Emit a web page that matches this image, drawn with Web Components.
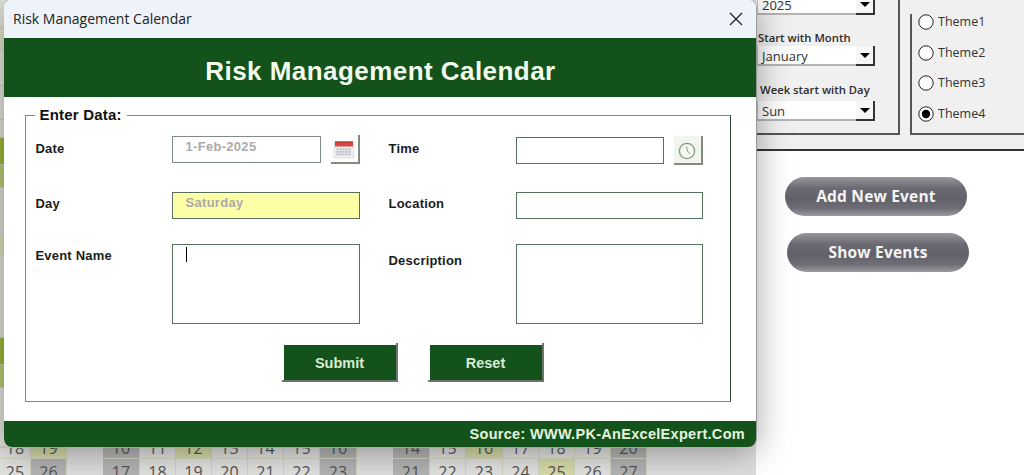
<!DOCTYPE html>
<html>
<head>
<meta charset="utf-8">
<title>Risk Management Calendar</title>
<style>
  html, body { margin: 0; padding: 0; background: #fff; }
</style>
</head>
<body>
<risk-app></risk-app>
<script>
class SheetStrip extends HTMLElement {
  connectedCallback() {
    const bands = [
      [28, "#e6e6e0"], [22, "#e4e6cc"], [36, "#e8e8e0"], [34, "#e6e6e0"], [18, "#e4e6d8"],
      [27, "#9fb83c"], [23, "#bccf78"], [47, "#e0e0da"], [20, "#dfe3b8"], [83, "#e4e4de"],
      [27, "#9fb83c"], [23, "#bccf78"], [59, "#e6e6e0"],
    ];
    this.attachShadow({ mode: "open" }).innerHTML = `
      <style>
        :host { display: flex; flex-direction: column; width: 5px; height: 447px; }
        div { box-sizing: border-box; border-bottom: 1px solid #cfd0c4; }
      </style>
      ${bands.map(([h, c]) => `<div style="height:${h}px;background:${c}"></div>`).join("")}`;
  }
}
customElements.define("sheet-strip", SheetStrip);

class CalendarRows extends HTMLElement {
  connectedCallback() {
    // top row is almost hidden behind the dialog, only the lower part of its digits shows
    const months = [
      { x: 0, w: [31, 36], top: ["18", "19"], bottom: ["25", "26"], topTone: ["", "h"], botTone: ["", "d"] },
      { x: 36, w: [37, 36, 36, 36, 36, 36, 37], top: ["10", "11", "12", "13", "14", "15", "16"], bottom: ["17", "18", "19", "20", "21", "22", "23"], topTone: ["d", "", "h", "", "", "", "d"], botTone: ["d", "", "", "", "", "", "d"] },
      { x: 36, w: [37, 36, 37, 36, 36, 36, 36], top: ["14", "15", "16", "17", "18", "19", "20"], bottom: ["21", "22", "23", "24", "25", "26", "27"], topTone: ["d", "", "h", "", "", "", "d"], botTone: ["d", "", "", "", "h", "", "d"] },
    ];
    const cell = (t, w, cls) => `<span class="cell ${cls}" style="width:${w}px">${t}</span>`;
    this.attachShadow({ mode: "open" }).innerHTML = `
      <style>
        :host { display: flex; height: 28px; width: 648px; font: 16px "Open Sans", sans-serif; color: #555; }
        .month { display: flex; flex-direction: column; }
        .row { display: flex; }
        .row.t { height: 11px; align-items: flex-end; }
        .row.b { height: 17px; }
        .cell { box-sizing: border-box; display: block; text-align: center; background: #e2e2e0; border-right: 1px solid #d2d3bf; border-top: 1px solid #d6d8c4; overflow: hidden; height: 100%; }
        .row.t .cell { line-height: 0; }
        .row.b .cell { line-height: 27px; }
        .cell.d { background: #b4b4b4; }
        .cell.h { background: #d8dba8; }
      </style>
      ${months.map((m) => `
        <div class="month" style="margin-left:${m.x}px">
          <div class="row t">${m.top.map((t, i) => cell(t, m.w[i], m.topTone[i])).join("")}</div>
          <div class="row b">${m.bottom.map((t, i) => cell(t, m.w[i], m.botTone[i])).join("")}</div>
        </div>`).join("")}`;
  }
}
customElements.define("calendar-rows", CalendarRows);

class ComboBox extends HTMLElement {
  connectedCallback() {
    const h = this.getAttribute("height") || 20;
    this.attachShadow({ mode: "open" }).innerHTML = `
      <style>
        :host { display: flex; box-sizing: border-box; width: 118px; height: ${h}px; background: #fff; border-bottom: 2px solid #b4b4b4; border-left: 1px solid #c4c4c4; font: 13px "Open Sans", sans-serif; color: #333; }
        .v { flex: 1; padding-left: 4px; line-height: 20px; }
        .b { width: 19px; box-sizing: border-box; background: #f6f6f6; border-right: 2px solid #333; border-bottom: 2px solid #333; display: flex; align-items: center; justify-content: center; margin-bottom: -2px; }
        .b i { width: 0; height: 0; border: 5px solid transparent; border-top: 5px solid #000; border-bottom: 0; }
      </style>
      <div class="v"><slot></slot></div>
      <div class="b"><i></i></div>`;
  }
}
customElements.define("combo-box", ComboBox);

class ThemeRadio extends HTMLElement {
  connectedCallback() {
    const on = this.hasAttribute("checked");
    this.attachShadow({ mode: "open" }).innerHTML = `
      <style>
        :host { display: flex; align-items: center; gap: 4px; height: 16px; font: 12.5px "Open Sans", sans-serif; color: #333; }
        svg { width: 16px; height: 16px; flex: none; }
        span { margin-top: -1px; }
      </style>
      <svg viewBox="0 0 16 16"><circle cx="8" cy="8" r="7.2" fill="#fff" stroke="#222" stroke-width="1"/>${on ? '<circle cx="8" cy="8" r="4.2" fill="#000"/>' : ""}</svg>
      <span><slot></slot></span>`;
  }
}
customElements.define("theme-radio", ThemeRadio);

class SidePanel extends HTMLElement {
  connectedCallback() {
    this.attachShadow({ mode: "open" }).innerHTML = `
      <style>
        :host { display: flex; box-sizing: border-box; height: 151px; align-items: flex-end; gap: 10px; overflow: hidden; background: #f0f0f0; border-bottom: 2px solid #333; padding-bottom: 14px; }
        .group { box-sizing: border-box; border: solid #555; border-width: 0 2px 2px 0; width: 144px; padding: 0 0 12px 1px; display: flex; flex-direction: column; }
        .lab { font: 600 11.3px "Open Sans", sans-serif; color: #2c2c2c; white-space: nowrap; line-height: 16px; }
        .lab.m { margin: 15px 0 0 1px; }
        .lab.w { margin: 16px 0 3px 3px; }
        .themes { flex: 1; box-sizing: border-box; border: solid #555; border-width: 0 0 2px 2px; display: flex; flex-direction: column; gap: 14.7px; padding: 0 0 11px 6px; }
      </style>
      <div class="group">
        <combo-box>2025</combo-box>
        <div class="lab m">Start with Month</div>
        <combo-box>January</combo-box>
        <div class="lab w">Week start with Day</div>
        <combo-box>Sun</combo-box>
      </div>
      <div class="themes">
        <theme-radio>Theme1</theme-radio>
        <theme-radio>Theme2</theme-radio>
        <theme-radio>Theme3</theme-radio>
        <theme-radio checked>Theme4</theme-radio>
      </div>`;
  }
}
customElements.define("side-panel", SidePanel);

class PillButton extends HTMLElement {
  connectedCallback() {
    this.attachShadow({ mode: "open" }).innerHTML = `
      <style>
        :host { display: flex; align-items: center; justify-content: center; box-sizing: border-box; padding-bottom: 2px; width: 182px; height: 39px; border-radius: 20px; background: linear-gradient(#96969b 0%, #6c6b73 28%, #62616a 55%, #6e6d75 80%, #9a9a9f 100%); color: #f4f4f4; font: 700 15.5px "Open Sans", sans-serif; letter-spacing: .2px; }
      </style>
      <slot></slot>`;
  }
}
customElements.define("pill-button", PillButton);

class FormField extends HTMLElement {
  connectedCallback() {
    this.attachShadow({ mode: "open" }).innerHTML = `
      <style>
        :host { display: block; box-sizing: border-box; border: 1.5px solid #56705c; background: #fff; padding: 2px 0 0 13px; font: bold 13px "Liberation Sans", Arial, sans-serif; letter-spacing: .3px; color: #aaa; line-height: 16px; min-width: 0; }
        :host([tone="soft"]) { border-color: #7f8c82; }
        :host([tone="yellow"]) { background: #ffffa8; }
        :host([caret]) { padding: 1px 0 0 13px; }
        .caret { display: block; width: 1px; height: 15px; background: #000; margin-top: 1px; }
      </style>
      ${this.hasAttribute("caret") ? '<span class="caret"></span>' : ""}<slot></slot>`;
  }
}
customElements.define("form-field", FormField);

class PickerButton extends HTMLElement {
  connectedCallback() {
    const kind = this.getAttribute("kind");
    const cal = `<svg viewBox="0 0 22 20" width="22" height="20">
      <rect x="1" y="3" width="20" height="16" fill="#eceef0" stroke="#d8d8d8" stroke-width=".6"/>
      <path d="M2 2.5h18v5H2z" fill="#d9483e"/>
      <path d="M2 2.5h18v1.2H2z" fill="#b03a32"/>
      <g fill="#b9bcc4">
        ${[9.5, 12, 14.5].map((y) => [3.5, 6.5, 9.5, 12.5, 15.5].map((x) => `<rect x="${x}" y="${y}" width="2.2" height="1.7"/>`).join("")).join("")}
      </g></svg>`;
    const clock = `<svg viewBox="0 0 20 20" width="20" height="20">
      <circle cx="10" cy="10" r="7.6" fill="#f6faf2" stroke="#7f9f80" stroke-width="1.4"/>
      <path d="M9.6 5.5 L10.4 10 L13 13" fill="none" stroke="#8a9a88" stroke-width="1"/></svg>`;
    this.attachShadow({ mode: "open" }).innerHTML = `
      <style>
        :host { display: flex; align-items: center; justify-content: center; box-sizing: border-box; width: 29px; height: 29px; border-right: 2px solid #85897f; border-bottom: 2px solid #85897f; padding-top: ${kind === "clock" ? 2 : 0}px; background: ${kind === "clock" ? "#f1f5ee" : "#fff"}; }
      </style>
      ${kind === "clock" ? clock : cal}`;
  }
}
customElements.define("picker-button", PickerButton);

class GreenButton extends HTMLElement {
  connectedCallback() {
    this.attachShadow({ mode: "open" }).innerHTML = `
      <style>
        :host { display: block; box-sizing: border-box; width: 116px; height: 39px; padding: 2px 2px 2px 2px;
          background: linear-gradient(#6f736f, #6f736f) right / 2px 100% no-repeat, linear-gradient(#6f736f, #6f736f) bottom / 100% 2px no-repeat; }
        div { height: 100%; display: flex; align-items: center; justify-content: center; background: #14521c; color: #d8ecd4; font: bold 14.5px "Liberation Sans", Arial, sans-serif; }
      </style>
      <div><slot></slot></div>`;
  }
}
customElements.define("green-button", GreenButton);

class RiskForm extends HTMLElement {
  connectedCallback() {
    this.attachShadow({ mode: "open" }).innerHTML = `
      <style>
        :host { display: block; }
        fieldset { box-sizing: border-box; margin: 9px 25px 0 21px; width: 706px; height: 296px; padding: 12px 0 0 9.5px; border: 1.5px solid; border-color: #7b8b7e #2f4d36 #7b8b7e #7b8b7e; }
        legend { margin-left: -1px; padding: 0 5px; font: bold 15px "Liberation Sans", Arial, sans-serif; color: #111; line-height: 18px; letter-spacing: .2px; }
        .grid { display: grid; grid-template-columns: 136px 188px 29px 127px 187px; grid-template-rows: 56px 52px 80px; }
        .lab { font: bold 13px "Liberation Sans", Arial, sans-serif; color: #1c1c1c; letter-spacing: .2px; padding-top: 5px; }
        .lab.c2 { grid-column: 4; }
        .lab.r2 { padding-top: 4px; }
        .grid > form-field.r2 { height: 27px; }
        .with { display: flex; gap: 10px; align-items: flex-start; height: 28px; }
        .with form-field { flex: 1; height: 27px; }
        .with picker-button { margin-top: -1px; flex: none; }
        .actions { display: flex; gap: 30px; margin: 19px 0 0 246px; }
      </style>
      <fieldset>
        <legend>Enter Data:</legend>
        <div class="grid">
          <div class="lab">Date</div>
          <div class="with"><form-field tone="soft">1-Feb-2025</form-field><picker-button kind="calendar"></picker-button></div>
          <div class="lab c2">Time</div>
          <div class="with"><form-field style="margin-top:1px"></form-field><picker-button kind="clock" style="margin-top:0"></picker-button></div>
          <div class="lab r2">Day</div>
          <form-field class="r2" tone="yellow">Saturday</form-field>
          <div class="lab c2 r2">Location</div>
          <form-field class="r2"></form-field>
          <div class="lab r2">Event Name</div>
          <form-field caret></form-field>
          <div class="lab c2" style="padding-top:9px">Description</div>
          <form-field></form-field>
        </div>
        <div class="actions">
          <green-button>Submit</green-button>
          <green-button>Reset</green-button>
        </div>
      </fieldset>`;
  }
}
customElements.define("risk-form", RiskForm);

class RiskDialog extends HTMLElement {
  connectedCallback() {
    this.attachShadow({ mode: "open" }).innerHTML = `
      <style>
        :host { position: absolute; left: 4px; top: 0; width: 752px; height: 447px; display: flex; flex-direction: column; background: #fff; border-radius: 8px; overflow: hidden; box-shadow: 0 4px 34px rgba(0,0,0,.38), 1px 0 0 #b8b8b8; }
        .title { height: 38px; flex: none; display: flex; align-items: center; justify-content: space-between; padding: 0 13px 1px 9px; box-sizing: border-box; background: #eef3fa; font: 14px "Open Sans", sans-serif; color: #222; }
        .head { height: 59px; flex: none; box-sizing: border-box; padding: 8px 0 0 1px; display: flex; align-items: center; justify-content: center; background: #14521c; color: #f2fbec; font: bold 26px "Liberation Sans", Arial, sans-serif; letter-spacing: .45px; }
        risk-form { flex: 1; }
        .foot { height: 26px; flex: none; box-sizing: border-box; padding: 0 11px 1px 0; display: flex; align-items: center; justify-content: flex-end; background: #14521c; color: #e4f4dc; font: bold 14.5px "Liberation Sans", Arial, sans-serif; letter-spacing: .3px; }
      </style>
      <div class="title"><span>Risk Management Calendar</span>
        <svg width="14" height="14" viewBox="0 0 14 14"><path d="M1 1L13 13M13 1L1 13" stroke="#222" stroke-width="1.3" fill="none"/></svg>
      </div>
      <div class="head">Risk Management Calendar</div>
      <risk-form></risk-form>
      <div class="foot">Source: WWW.PK-AnExcelExpert.Com</div>`;
  }
}
customElements.define("risk-dialog", RiskDialog);

class RiskApp extends HTMLElement {
  connectedCallback() {
    this.attachShadow({ mode: "open" }).innerHTML = `
      <style>
        :host { display: grid; grid-template-columns: 756px 268px; width: 1024px; height: 475px; position: relative; overflow: hidden; background: #fff; }
        .left { display: flex; flex-direction: column; justify-content: space-between; background: #dedede; }
        .right { display: flex; flex-direction: column; }
        .events { display: flex; flex-direction: column; gap: 17px; padding: 26px 0 0 29px; }
        .events pill-button:last-child { margin-left: 2px; }
      </style>
      <div class="left">
        <sheet-strip></sheet-strip>
        <calendar-rows></calendar-rows>
      </div>
      <div class="right">
        <side-panel></side-panel>
        <div class="events">
          <pill-button>Add New Event</pill-button>
          <pill-button>Show Events</pill-button>
        </div>
      </div>
      <risk-dialog></risk-dialog>`;
  }
}
customElements.define("risk-app", RiskApp);
</script>
</body>
</html>
